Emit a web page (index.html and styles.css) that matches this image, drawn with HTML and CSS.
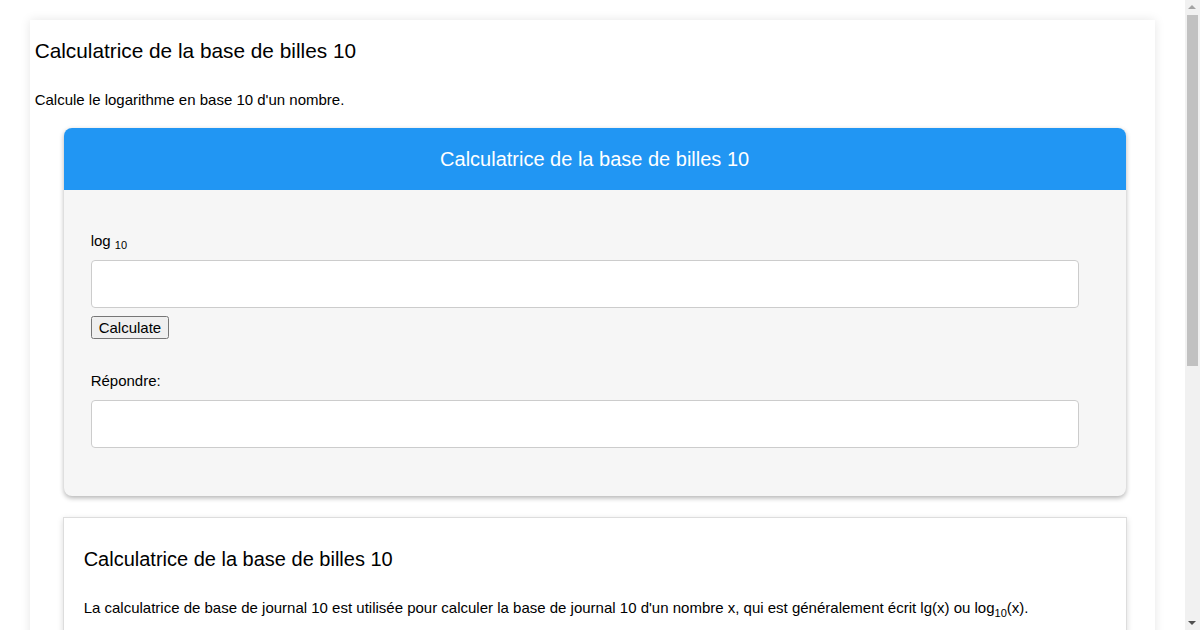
FILE: index.html
```html
<!doctype html>
<html>
<head>
<meta charset="utf-8">
<title>Calculatrice de la base de billes 10</title>
<link rel="stylesheet" href="styles.css">
</head>
<body>
<div class="page">
	<h1 class="page-title">Calculatrice de la base de billes 10</h1>
	<p class="page-desc">Calcule le logarithme en base 10 d'un nombre.</p>

	<div class="calc">
		<div class="calc-head">Calculatrice de la base de billes 10</div>
		<div class="calc-body">
			<label class="calc-label" for="num">log <sub>10</sub></label>
			<input class="calc-input" id="num" type="text">
			<button class="calc-btn" type="button">Calculate</button>
			<label class="calc-label calc-label-answer" for="ans">Répondre:</label>
			<input class="calc-input" id="ans" type="text">
		</div>
	</div>

	<div class="info">
		<h2 class="info-title">Calculatrice de la base de billes 10</h2>
		<p class="info-text">La calculatrice de base de journal 10 est utilisée pour calculer la base de journal 10 d'un nombre x, qui est généralement écrit lg(x) ou log<sub>10</sub>(x).</p>
	</div>
</div>

<div class="scrollbar">
	<span class="sb-up"></span>
	<span class="sb-thumb"></span>
	<span class="sb-down"></span>
</div>
</body>
</html>
```

FILE: styles.css
```css
*{box-sizing: border-box;}
body{margin:0; padding:20px 15px 40px 0; background:#fff; font-family:"Liberation Sans", Arial, sans-serif; color:#000;}
.page{width:95%; margin:0 auto; padding:5px 5px 30px; background:#fff; box-shadow:0 0 10px rgba(0,0,0,0.1);}
.page-title{font-size:20.8px; font-weight:normal; line-height:24px; margin:14px 0 0;}
.page-desc{font-size:15px; line-height:17px; margin:28px 0 0;}

.calc{width:1062px; margin:20px 0 0 29px; border-radius:8px; background:#f6f6f6; box-shadow:0 2px 5px rgba(0,0,0,0.3); overflow:hidden;}
.calc-head{background:#2196f3; color:#fff; text-align:center; font-size:20px; line-height:24px; padding:19px 0;}
.calc-body{padding:42px 27px 48px;}
.calc-label{display:block; font-size:15px; line-height:17px; margin-bottom:11px;}
.calc-label sub{font-size:11px; vertical-align:-3px; line-height:0;}
.calc-label-answer{margin-top:33px; margin-bottom:11px;}
.calc-input{display:block; width:988px; height:48px; margin:0; border:1px solid #ccc; border-radius:4px; background:#fff; font-size:15px; padding:0 10px;}
.calc-btn{display:block; margin-top:8px; font-family:"Liberation Sans", Arial, sans-serif; font-size:15px; line-height:17px; height:23px; padding:1px 6px;}

.info{width:1064px; margin:21px 0 0 28px; padding:30px 20px 80px; background:#fff; border:1px solid #ddd; box-shadow:0 2px 6px rgba(0,0,0,0.15);}
.info-title{font-size:20px; font-weight:normal; line-height:23px; margin:0;}
.info-text{font-size:15px; line-height:17px; margin:28px 0 0;}
.info-text sub{font-size:11px; vertical-align:-4px; line-height:0;}

.scrollbar{position:fixed; top:0; right:0; bottom:0; width:15px; background:#f1f1f1;}
.sb-thumb{position:absolute; top:15px; left:2px; width:11px; height:351px; background:#c1c1c1;}
.sb-up,.sb-down{position:absolute; left:3px; width:0; height:0; border-left:4.5px solid transparent; border-right:4.5px solid transparent;}
.sb-up{top:5px; border-bottom:4px solid #a3a3a3;}
.sb-down{bottom:5px; border-top:4px solid #505050;}
```
